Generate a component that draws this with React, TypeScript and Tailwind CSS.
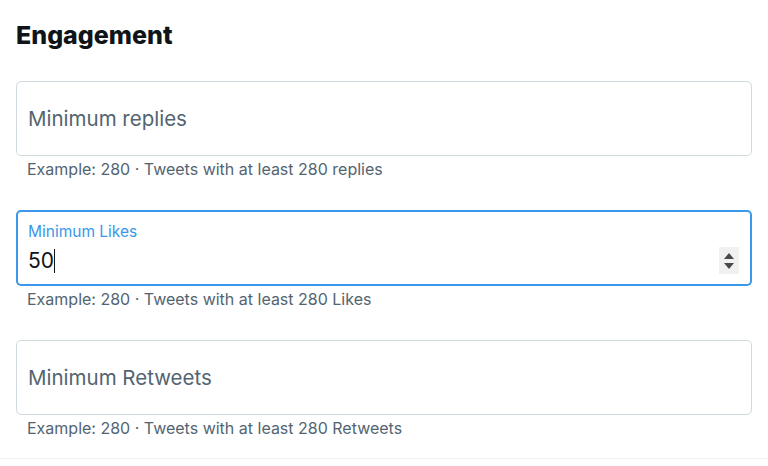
import { useState } from "react";

const font = { fontFamily: "Inter, 'Liberation Sans', sans-serif" };

function Field({
  label,
  helper,
  value,
  focused,
}: {
  label: string;
  helper: string;
  value?: string;
  focused?: boolean;
}) {
  return (
    <div className="flex flex-col">
      {focused ? (
        <div className="h-[76px] rounded-[5px] border-2 border-[#3a97ea] flex pl-[10px] pr-[11px]">
          <div className="flex-1 flex flex-col pt-[11px]">
            <span className="text-[15.5px] leading-[18px] text-[#3a97ea]">{label}</span>
            <div className="flex items-center mt-[8px] h-[24px]">
              <span className="text-[21px] leading-[24px] text-[#0f1419]">{value}</span>
              <span className="w-px h-[24px] bg-[#0f1419]" />
            </div>
          </div>
          <div className="w-[20px] h-[27px] bg-[#f1f1f1] flex flex-col items-center justify-center gap-[4px] mt-[35px]">
            <svg width="10" height="6" viewBox="0 0 10 6">
              <path d="M0 6 L5 0 L10 6 Z" fill="#4a4a4a" />
            </svg>
            <svg width="10" height="6" viewBox="0 0 10 6">
              <path d="M0 0 L10 0 L5 6 Z" fill="#4a4a4a" />
            </svg>
          </div>
        </div>
      ) : (
        <div className="h-[75px] rounded-[5px] border border-[#cfd9de] flex items-center px-[11px]">
          <span className="text-[20.5px] leading-[24px] text-[#536471]">{label}</span>
        </div>
      )}
      <p className="mt-[4px] pl-[11px] text-[16px] leading-[18px] text-[#536471]">{helper}</p>
    </div>
  );
}

export default function App() {
  const [likes] = useState("50");
  return (
    <div className="w-[768px] h-[466px] bg-white overflow-hidden flex flex-col" style={font}>
      <div className="h-[459px] px-4 pt-[20px] border-b border-[#eff3f4]">
        <h2 className="text-[25px] leading-[30px] font-extrabold text-[#0f1419]">Engagement</h2>
        <div className="mt-[31px] flex flex-col gap-[32px]">
          <Field
            label="Minimum replies"
            helper="Example: 280 · Tweets with at least 280 replies"
          />
          <Field
            label="Minimum Likes"
            helper="Example: 280 · Tweets with at least 280 Likes"
            value={likes}
            focused
          />
          <Field
            label="Minimum Retweets"
            helper="Example: 280 · Tweets with at least 280 Retweets"
          />
        </div>
      </div>
    </div>
  );
}
